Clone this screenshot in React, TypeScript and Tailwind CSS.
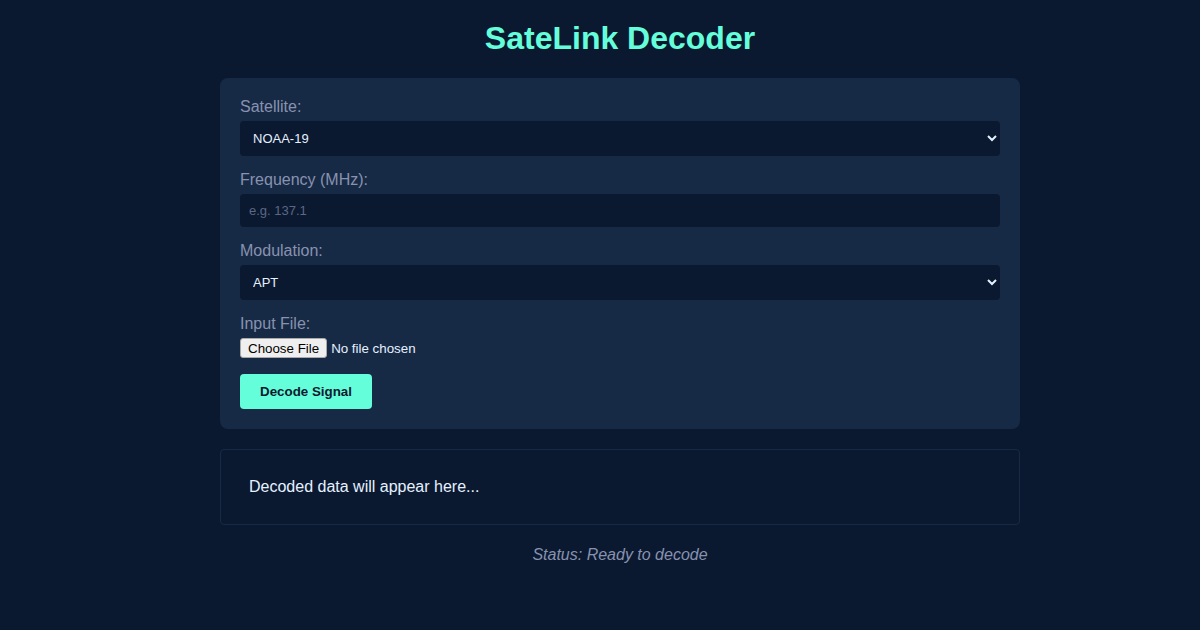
export default function App() {
  return (
    <main className="min-h-screen w-full bg-[#0a192f] pl-10 font-['Liberation_Sans',Arial,sans-serif] text-[#ccd6f6]">
      <div className="mx-auto w-[800px] pt-5">
        <h1 className="mb-[21px] text-center text-[32px] leading-[37px] font-bold text-[#64ffda]">SateLink Decoder</h1>

        {/* Controls */}
        <section className="flex flex-col rounded-lg bg-[#172a45] p-5">
          <label className="mb-[5px] text-base leading-[18px] text-[#8892b0]">Satellite:</label>
          <select className="mb-[15px] h-[35px] rounded bg-[#0a192f] pr-2 pl-[9px] text-[13px] text-[#e6f1ff] outline-none" defaultValue="NOAA-19">
            <option>NOAA-19</option>
            <option>NOAA-18</option>
            <option>NOAA-15</option>
            <option>METEOR-M2</option>
          </select>

          <label className="mb-[5px] text-base leading-[18px] text-[#8892b0]">Frequency (MHz):</label>
          <input
            type="text"
            placeholder="e.g. 137.1"
            className="mb-[15px] h-[33px] rounded bg-[#0a192f] px-[9px] text-[13px] text-[#e6f1ff] outline-none placeholder:text-[#5c6785]"
          />

          <label className="mb-[5px] text-base leading-[18px] text-[#8892b0]">Modulation:</label>
          <select className="mb-[15px] h-[35px] rounded bg-[#0a192f] pr-2 pl-[9px] text-[13px] text-[#e6f1ff] outline-none" defaultValue="APT">
            <option>APT</option>
            <option>LRPT</option>
            <option>HRPT</option>
          </select>

          <label className="mb-[5px] text-base leading-[18px] text-[#8892b0]">Input File:</label>
          <input
            type="file"
            className="mb-[15px] h-[21px] text-[13.33px] leading-[19px] text-[#e6f1ff] file:mr-1 file:h-[20px] file:rounded-[3px] file:border file:border-solid file:border-[#a9a9a9] file:bg-[#efefef] file:px-[7px] file:text-[13.33px] file:text-black"
          />

          <button className="h-[35px] w-[132px] rounded bg-[#64ffda] text-[13.33px] font-bold text-[#0a192f]">Decode Signal</button>
        </section>

        {/* Output */}
        <section className="mt-5 rounded border border-[#172a45] bg-[#0a192f] px-7 py-[28px]">
          <p className="text-base leading-[18px] text-[#e6f1ff]">Decoded data will appear here...</p>
        </section>

        <p className="mt-[21px] text-center text-base leading-[18px] italic text-[#8892b0]">Status: Ready to decode</p>
      </div>
    </main>
  );
}
